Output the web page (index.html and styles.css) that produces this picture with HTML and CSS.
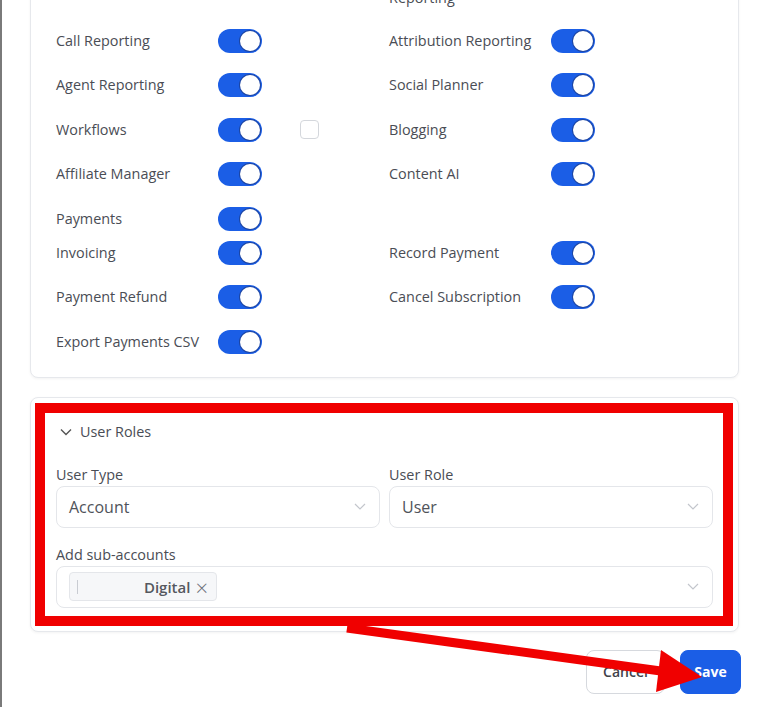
FILE: index.html
```html
<!DOCTYPE html>
<html lang="en">
<head>
<meta charset="utf-8">
<title>User permissions</title>
<link rel="stylesheet" href="styles.css">
</head>
<body>
<div class="frame">
  <div class="page">
    <section class="card perms">
      <div class="rows">
        <div class="row row-top">
          <div class="item"></div>
          <div class="item"><span class="label">Conversation AI<br>Reporting</span></div>
        </div>
        <div class="row">
          <div class="item"><span class="label">Call Reporting</span><span class="toggle"></span></div>
          <div class="item"><span class="label">Attribution Reporting</span><span class="toggle"></span></div>
        </div>
        <div class="row">
          <div class="item"><span class="label">Agent Reporting</span><span class="toggle"></span></div>
          <div class="item"><span class="label">Social Planner</span><span class="toggle"></span></div>
        </div>
        <div class="row">
          <div class="item"><span class="label">Workflows</span><span class="toggle"></span><span class="checkbox"></span></div>
          <div class="item"><span class="label">Blogging</span><span class="toggle"></span></div>
        </div>
        <div class="row">
          <div class="item"><span class="label">Affiliate Manager</span><span class="toggle"></span></div>
          <div class="item"><span class="label">Content AI</span><span class="toggle"></span></div>
        </div>
        <div class="pay-group">
          <div class="row">
            <div class="item"><span class="label">Payments</span><span class="toggle"></span></div>
            <div class="item"></div>
          </div>
          <div class="row">
            <div class="item"><span class="label">Invoicing</span><span class="toggle"></span></div>
            <div class="item"><span class="label">Record Payment</span><span class="toggle"></span></div>
          </div>
        </div>
        <div class="row">
          <div class="item"><span class="label">Payment Refund</span><span class="toggle"></span></div>
          <div class="item"><span class="label">Cancel Subscription</span><span class="toggle"></span></div>
        </div>
        <div class="row">
          <div class="item"><span class="label">Export Payments CSV</span><span class="toggle"></span></div>
          <div class="item"></div>
        </div>
      </div>
    </section>

    <section class="card roles">
      <div class="roles-head">
        <svg class="chev-head" width="12" height="8" viewBox="0 0 12 8"><path d="M1 1.5 L6 6.5 L11 1.5" fill="none" stroke="#555" stroke-width="1.4"/></svg>
        <span>User Roles</span>
      </div>
      <div class="fields">
        <div class="field">
          <div class="flabel">User Type</div>
          <div class="select"><span>Account</span><svg class="chev" width="12" height="7" viewBox="0 0 12 7"><path d="M1 1 L6 6 L11 1" fill="none" stroke="#c3c6cc" stroke-width="1.2"/></svg></div>
        </div>
        <div class="field">
          <div class="flabel">User Role</div>
          <div class="select"><span>User</span><svg class="chev" width="12" height="7" viewBox="0 0 12 7"><path d="M1 1 L6 6 L11 1" fill="none" stroke="#c3c6cc" stroke-width="1.2"/></svg></div>
        </div>
        <div class="field wide">
          <div class="flabel">Add sub-accounts</div>
          <div class="select multi">
            <span class="tag"><span class="redact"></span><span class="tag-text">Digital</span><span class="tag-x">×</span></span>
            <svg class="chev" width="12" height="7" viewBox="0 0 12 7"><path d="M1 1 L6 6 L11 1" fill="none" stroke="#c3c6cc" stroke-width="1.2"/></svg>
          </div>
        </div>
      </div>
    </section>

    <div class="actions">
      <button class="btn cancel">Cancel</button>
      <button class="btn save">Save</button>
    </div>
  </div>

  <svg class="annot" width="768" height="707" viewBox="0 0 768 707">
    <rect x="40" y="408" width="688" height="213" fill="none" stroke="#f00000" stroke-width="10"/>
    <line x1="347" y1="628" x2="668" y2="672" stroke="#f00000" stroke-width="9"/>
    <polygon points="661,650 702,677 656,692" fill="#f00000"/>
  </svg>
</div>
</body>
</html>
```
FILE: styles.css
```css
* { box-sizing: border-box; }
html, body { margin: 0; padding: 0; background: #fff; }
body {
  font-family: "Open Sans", "Noto Sans", sans-serif;
  color: #4a4d55;
  overflow: hidden;
}
.frame {
  position: relative;
  width: 768px;
  height: 707px;
  border-left: 2px solid #7a7a7a;
  overflow: hidden;
}
.page {
  margin-top: -53px;
  padding: 0 29px 0 28px;
  display: flex;
  flex-direction: column;
}
.card {
  background: #fff;
  border: 1px solid #e6e8ec;
  border-radius: 8px;
  box-shadow: 0 1px 3px rgba(0,0,0,0.05);
  padding-left: 25px;
  padding-right: 25px;
}
.perms { padding-top: 20px; padding-bottom: 23px; }
.rows { display: flex; flex-direction: column; gap: 20.5px; }
.pay-group { display: flex; flex-direction: column; gap: 10px; }
.row {
  display: grid;
  grid-template-columns: 1fr 1fr;
  column-gap: 9px;
  height: 24px;
}
.row-top { height: 40px; }
.item { display: flex; align-items: center; }
.label {
  width: 162px;
  font-size: 14.4px;
  line-height: 20px;
  color: #4a4d55;
  white-space: nowrap;
}
.toggle {
  position: relative;
  width: 44px;
  height: 24px;
  border-radius: 12px;
  background: #1b5ee6;
  flex: none;
}
.toggle::after {
  content: "";
  position: absolute;
  right: 2px;
  top: 2px;
  width: 20px;
  height: 20px;
  border-radius: 50%;
  background: #fff;
  box-shadow: 0 0 0 1px rgba(30,50,110,0.55);
}
.checkbox {
  width: 19px;
  height: 19px;
  border: 1px solid #d4d7dc;
  border-radius: 4px;
  margin-left: 38px;
  background: #fff;
  flex: none;
}
.roles {
  margin-top: 19px;
  padding-top: 23px;
  padding-bottom: 23px;
}
.roles-head {
  display: flex;
  align-items: center;
  gap: 8px;
  height: 22px;
  padding-left: 4px;
  font-size: 14.4px;
  color: #4a4d55;
}
.fields {
  margin-top: 22px;
  display: grid;
  grid-template-columns: 1fr 1fr;
  column-gap: 9px;
  row-gap: 17px;
}
.field.wide { grid-column: 1 / span 2; }
.flabel {
  font-size: 14.4px;
  line-height: 20px;
  margin-bottom: 1px;
  color: #4a4d55;
}
.select {
  height: 42px;
  border: 1px solid #e4e6ea;
  border-radius: 8px;
  display: flex;
  align-items: center;
  justify-content: space-between;
  padding: 0 13px 0 12px;
  font-size: 16px;
  color: #50535a;
}
.multi { margin-top: 1px; }
.tag {
  display: flex;
  align-items: center;
  height: 29px;
  width: 148px;
  border: 1px solid #e4e6ea;
  border-radius: 4px;
  background: #f6f7f9;
  padding: 0 8px 0 7px;
}
.redact {
  width: 1px;
  height: 14px;
  background: #c9ccd2;
  margin-right: auto;
}
.tag-text {
  font-size: 15px;
  font-weight: 600;
  color: #55585f;
}
.tag-x {
  margin-left: 5px;
  font-size: 22px;
  font-weight: 300;
  line-height: 1;
  color: #6a6e76;
}
.actions {
  margin-top: 18px;
  display: flex;
  justify-content: flex-end;
  gap: 15px;
  margin-right: -2px;
}
.btn {
  font-family: "Open Sans", "Noto Sans", sans-serif;
  font-size: 14px;
  font-weight: 600;
  border-radius: 8px;
  height: 44px;
  cursor: pointer;
}
.cancel {
  width: 79px;
  background: #fff;
  border: 1px solid #d6d9de;
  color: #3f434a;
}
.save {
  width: 61px;
  background: #1b5ee6;
  border: 1px solid #1b5ee6;
  color: #fff;
  font-weight: 700;
}
.annot {
  position: absolute;
  left: -2px;
  top: 0;
  pointer-events: none;
}
```
